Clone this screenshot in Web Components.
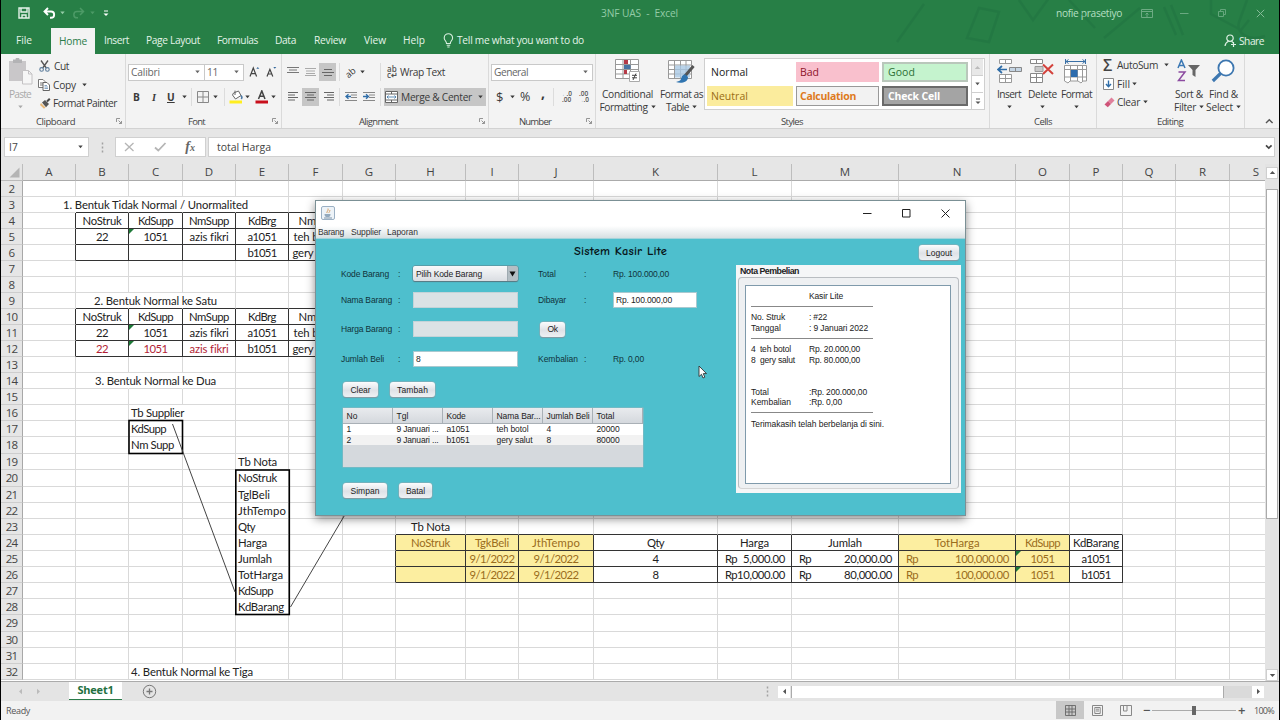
<!DOCTYPE html>
<html lang="id">
<head>
<meta charset="utf-8">
<title>3NF UAS - Excel</title>
<style>
  body {
    margin: 0;
    width: 1280px;
    height: 720px;
    overflow: hidden;
    background: #000;
    font-family: "Open Sans", "Noto Sans", sans-serif;
    font-size: 10.2px;
    color: #333;
  }
</style>
</head>
<body>
<excel-app></excel-app>

<script>
const ICONS = {
  save: [12, 12, '<path d="M1 1h10v10H1zM3 1v4h6V1M4 11V8h4v3" fill="none" stroke="#e6f3ea" stroke-width="1.4"/>'],
  undo: [13, 12, '<path d="M5 1L1.5 4.5 5 8M2 4.5h6a3 3 0 010 6.3H7" fill="none" stroke="#fff" stroke-width="1.9"/>'],
  redo: [13, 12, '<path d="M8 1l3.500 3.500L8 8M11 4.500H5a3 3 0 000 6.300h1" fill="none" stroke="#4c9a66" stroke-width="1.500"/>'],
  qat: [6, 7, '<path d="M1 1h4" stroke="#fff"/><path d="M.5 3.500h5L3 6z" fill="#fff"/>'],
  more: [6, 7, '<path d="M1 1h4" stroke="#555"/><path d="M.5 3.500h5L3 6z" fill="#555"/>'],
  caret: [5, 4, '<path d="M.3.500h4.400L2.500 3.200z" fill="currentColor"/>'],
  bulb: [11, 15, '<path d="M3.500 10.500C3.500 8 1.200 7.500 1.200 4.900a4.200 4.200 0 018.400 0c0 2.600-2.300 3.100-2.300 5.600zM3.700 12.300h3.500M4.300 14h2.300" fill="none" stroke="#d9f0e0" stroke-width="1.100"/>'],
  person: [13, 13, '<circle cx="6" cy="4.200" r="3.200" fill="none" stroke="#e0f2e6" stroke-width="1.200"/><path d="M1 12c.4-2.500 1.700-4 3.600-4.700M7.500 7.300L9 8.500M9.500 8v5M7 10.500h5" fill="none" stroke="#e0f2e6" stroke-width="1.200"/>'],
  ribbonOpts: [12, 9, '<path d="M.5.500h11v8H.5zM.5 2.500h11M6 8V4M4.500 5.500L6 4l1.500 1.500" fill="none" stroke="#6dab83"/>'],
  tMin: [9, 3, '<path d="M0 1.500h8.500" stroke="#6aa981"/>'],
  tRestore: [8, 8, '<path d="M.5 2.500h5v5h-5zM2.500 2V.5h5v5H6" fill="none" stroke="#64a67c"/>'],
  tClose: [9, 9, '<path d="M.8.800l7.400 7.400M8.200.800L.8 8.200" stroke="#86bc98"/>'],
  paste: [25, 27, '<path d="M1 3h17v20H1z" fill="#c9c7c9"/><path d="M5 1.500h2.500a2 2 0 014 0H14V5H5z" fill="#b3b3b5"/><path d="M14.500 12.500h6l3.500 3.500v10h-9.500z" fill="#f6f6f6" stroke="#c4c2c4"/><path d="M20.500 12.500V16H24" fill="none" stroke="#c4c2c4"/>'],
  cut: [11, 12, '<path d="M2 .5l5.300 7.500M9 .5L3.700 8" stroke="#555" stroke-width="1.300"/><circle cx="2.600" cy="9.400" r="1.800" fill="none" stroke="#5b7c9b" stroke-width="1.100"/><circle cx="8.400" cy="9.400" r="1.800" fill="none" stroke="#5b7c9b" stroke-width="1.100"/>'],
  copy: [12, 12, '<path d="M.5.500h4.500L7 2.500v6H.5zM2 4h3M2 6h3" fill="#fff" stroke="#777"/><path d="M5 3.500h4L11.500 6v5.500H5z" fill="#fff" stroke="#666"/><path d="M6.500 6.500H9M6.500 8H10M6.500 9.500H10" stroke="#6a8fb5" stroke-width=".8"/>'],
  painter: [11, 11, '<path d="M1 5l4.500 4.500L4 10.800 0 7z" fill="#e8b878"/><path d="M2 4.500L5 2l4 4-3 3.200z" fill="#555"/><path d="M7 3.500L9.800.8" stroke="#4a4a4a" stroke-width="2"/>'],
  launcher: [6, 6, '<path d="M.5 4V.5H4M2.500 2.500L5.500 5.500M5.500 3v2.500H3" fill="none" stroke="#8a8a8a" stroke-width=".9"/>'],
  growFont: [11, 12, '<path d="M1 10.500L4.300 2l3.300 8.500M2.200 7.700h4.200" fill="none" stroke="#444" stroke-width="1.200"/><path d="M7.300 2.800L8.800 1l1.500 1.800z" fill="#35689b"/>'],
  shrinkFont: [11, 12, '<path d="M1 10.500L3.900 3.300l2.900 7.200M2 8h3.800" fill="none" stroke="#444" stroke-width="1.200"/><path d="M7.300 1h3L8.800 2.800z" fill="#35689b"/>'],
  borders: [12, 12, '<path d="M.5.500h11v11H.5zM6 .5v11M.5 6h11" fill="none" stroke="#888"/>'],
  bucket: [14, 14, '<path d="M4.500 3L9.500 1l2.500 4.500-5.500 3.500L3.500 5zM6 5V.6" fill="#fff" stroke="#666"/><path d="M12 5.500c1 1 1 2.500.3 3.500" stroke="#4a78a5" stroke-width="1.600" fill="none"/><path d="M.5 10.500h12.500v3H.5z" fill="#ffee1f"/>'],
  fontColor: [14, 14, '<path d="M3.500 9L6.800.900 10 9M4.700 6.300h4.200" fill="none" stroke="#444" stroke-width="1.500"/><path d="M.5 10.500h12.500v3H.5z" fill="#c80f1b"/>'],
  linesTop: [13, 10, '<path d="M0 .5h12M2 3h8M0 5.500h12" stroke="#777"/>'],
  linesMid: [12, 10, '<path d="M0 1.500h11M1 4h9M1 6.500h9M0 8.500h11" stroke="#aaa"/>'],
  linesBottom: [12, 10, '<path d="M2 2.500h8M0 5.500h12M2 8.500h8" stroke="#666"/>'],
  alignLeft: [11, 9, '<path d="M0 .5h10M0 3h7M0 5.500h10M0 8h7" stroke="#666"/>'],
  alignCenter: [12, 9, '<path d="M0 .5h11M2 3h7M0 5.500h11M2 8h7" stroke="#666"/>'],
  alignRight: [11, 9, '<path d="M0 .5h10M3 3h7M0 5.500h10M3 8h7" stroke="#666"/>'],
  indentLeft: [13, 10, '<path d="M0 .5h12M6 3h6M6 5.500h6M0 8.500h12" stroke="#888"/><path d="M6 4.500H1.500M3.500 2.300L1 4.500l2.500 2.200" fill="none" stroke="#2f6da8" stroke-width="1.300"/>'],
  indentRight: [13, 10, '<path d="M0 .5h12M6 3h6M6 5.500h6M0 8.500h12" stroke="#888"/><path d="M0 4.500h4.500M3 2.300l2.500 2.200L3 6.700" fill="none" stroke="#2f6da8" stroke-width="1.300"/>'],
  mergeCells: [13, 12, '<path d="M.5.500h12v11H.5zM.5 3h12M.5 9h12M6.500.500V3M6.500 9v2.500" fill="#fff" stroke="#666"/><path d="M2 6h9M3.500 4.500L2 6l1.500 1.500M9.500 4.500L11 6 9.500 7.500" fill="none" stroke="#4b7fae" stroke-width=".9"/>'],
  condFmt: [26, 26, '<path d="M.5 1.500h23v19H.5zM.5 6.500h23M.5 11.500h23M.5 16h23M8 1.500v19M15.500 1.500v19" fill="#fff" stroke="#999"/><path d="M9 2h4v4H9zM9 12h3v4H9z" fill="#b53a47"/><path d="M9 7h6.500v4H9z" fill="#4873a3"/><path d="M14.500 13.500h10v10h-10z" fill="#fff" stroke="#aaa"/><path d="M17 17.300h5M17 19.800h5M21 15.500l-3 6.500" stroke="#444"/>'],
  fmtTable: [27, 25, '<path d="M.5 1.500h23v18H.5zM.5 6h23M.5 10.500h23M.5 15h23M6.500 1.500v18M12.500 1.500v18M18 1.500v18" fill="#fff" stroke="#999"/><path d="M7 6.500h15v12H7z" fill="#a9c8e3" opacity=".8"/><path d="M25.500 7L17 17" stroke="#555" stroke-width="3"/><path d="M17.500 15.500c-3 0-3.500 1.500-4.500 4.500-.5 1.800-3 2.500-5 3 4 1.500 12 1 12-5z" fill="#2f74b0"/>'],
  insertCells: [25, 25, '<path d="M2.500.500h12v4h-12zM8.500.500v4M2.500 15.500h12v8h-12zM8.500 15.500v8M2.500 19.500h12" fill="#fff" stroke="#999"/><path d="M12.500 8.500h12v4h-12zM18.500 8.500v4" fill="#c5d5e4" stroke="#888"/><path d="M10 10.500H2M5 7l-4 3.500L5 14" fill="none" stroke="#2f6da8" stroke-width="1.700"/>'],
  deleteCells: [25, 25, '<path d="M.5.500h12v4H.5zM6.500.500v4M.5 14.500h12v9H.5zM6.500 14.500v9M.5 18.500h12" fill="#fff" stroke="#888"/><path d="M5 7.500h8v5H5z" fill="#c9c9c9" stroke="#999"/><path d="M13 5.500l10 9.500M23 5.500L13 15" stroke="#d3423c" stroke-width="2"/>'],
  formatCells: [25, 25, '<path d="M1.500 2.500h20M1.500 0v5M21.500 0v5M4.500.500l-2.500 2 2.500 2M18.500.500l2.500 2-2.500 2" fill="none" stroke="#3a70a6"/><path d="M.5 6.500h22V22H19l-2 2-3-2H6l-2 2-3.500-2zM.5 10.500h22M.5 18h22M6.500 6.500V22M13.500 6.500V22M18.500 6.500V22" fill="#fff" stroke="#999"/><path d="M7 11h6.500v7H7z" fill="#2d6cad"/>'],
  fill: [11, 12, '<path d="M.5.500h10v11H.5z" fill="#fff" stroke="#888"/><path d="M5.500 2.500v6M3 6l2.500 2.800L8 6" fill="none" stroke="#2f6da8" stroke-width="1.400"/>'],
  eraser: [11, 11, '<path d="M4 4l3.500-3.500 3 3L7 7z" fill="#e0809c"/><path d="M.5 7.500L4 4l3 3-3.200 3.300z" fill="#cf5378"/>'],
  sortFilter: [24, 24, '<path d="M1 9L4.400 1 8 9M2.300 6.500h4.300" fill="none" stroke="#3a77b3" stroke-width="1.500"/><path d="M1.500 13H8L1.500 21.500H8" fill="none" stroke="#8c4ba0" stroke-width="1.500"/><path d="M11 6h12l-4.500 5v7l-3-2v-5z" fill="#666"/>'],
  magnifier: [25, 25, '<circle cx="15" cy="9" r="7.600" fill="#fff" stroke="#3d77b0" stroke-width="1.800"/><path d="M9.500 14.500L1.800 22" stroke="#3d77b0" stroke-width="3.200"/>'],
  chevUp: [9, 6, '<path d="M1 5l3.300-3.300L7.600 5" fill="none" stroke="#555" stroke-width="1.400"/>'],
  chevDown: [8, 6, '<path d="M1 1.300L3.800 4 6.600 1.300" fill="none" stroke="#444" stroke-width="1.700"/>'],
  cancel: [11, 10, '<path d="M1 1l8.500 8M9.500 1L1 9" stroke="#b5b5b5" stroke-width="1.300"/>'],
  check: [13, 10, '<path d="M1 5.500L4.300 8.500 11.500 1" fill="none" stroke="#b5b5b5" stroke-width="1.800"/>'],
  dots: [3, 11, '<path d="M1.500.500v2M1.500 4.500v2M1.500 8.500v2" stroke="#a2a2a2" stroke-width="1.500"/>'],
  corner: [11, 11, '<path d="M10.500.500v10H.5z" fill="#b4b4b4"/>'],
  arrLeft: [5, 7, '<path d="M4 .8v5.400L1 3.500z" fill="currentColor"/>'],
  arrRight: [5, 7, '<path d="M1 .8v5.400l3-2.700z" fill="currentColor"/>'],
  arrUp: [7, 5, '<path d="M.8 4h5.400L3.500 1z" fill="currentColor"/>'],
  arrDown: [7, 5, '<path d="M.8 1h5.400L3.500 4z" fill="currentColor"/>'],
  addSheet: [15, 15, '<circle cx="7.500" cy="7.500" r="6.200" fill="none" stroke="#777"/><path d="M4.500 7.500h6M7.500 4.500v6" stroke="#777" stroke-width="1.300"/>'],
  viewNormal: [11, 11, '<path d="M.5.500h10v10H.5zM4 .5v10M7 .5v10M.5 4h10M.5 7h10" fill="none" stroke="#666" stroke-width=".9"/>'],
  viewPage: [11, 11, '<path d="M.5.500h10v10H.5zM2.800 2.500h5.400v6H2.800zM4 4.200h3M4 6h3" fill="none" stroke="#888"/>'],
  viewBreak: [12, 11, '<path d="M.5.500h11v10H.5zM3.500.500V6H7V.5" fill="none" stroke="#888"/>'],
  java: [14, 14, '<rect x=".5" y=".5" width="13" height="13" rx="1.500" fill="#edf3f8" stroke="#9bb0c4"/><path d="M3.500 8h6c0 1.500-.5 2.500-1.500 3h-3c-1-.5-1.500-1.500-1.500-3z" fill="#93a9bd"/><path d="M3 12h8" stroke="#7e93a8"/><path d="M6 7C5 5.500 8 5 7 2.500M8 7c-.5-1 1.500-1.500.8-3" fill="none" stroke="#d9a46b"/>'],
  wMin: [9, 3, '<path d="M0 1.500h8.500" stroke="#222"/>'],
  wMax: [9, 9, '<path d="M.5.500h7.500v7.500H.5z" fill="none" stroke="#222"/>'],
  wClose: [9, 9, '<path d="M.5.500l8 8M8.500.500l-8 8" stroke="#222"/>'],
  comboArrow: [7, 6, '<path d="M.5.500h6L3.500 5.500z" fill="#111"/>'],
  pointer: [9, 14, '<path d="M1 1v10.500l2.500-2.200L5 13l1.800-.8-1.500-3.600H8.500z" fill="#fff" stroke="#333" stroke-width=".9"/>'],
};

class UiIcon extends HTMLElement {
    connectedCallback() {
        const [w, h, body] = ICONS[this.getAttribute('name')];
        this.attachShadow({mode: 'open'}).innerHTML = `
            <style>
              :host { display: inline-block; flex: none; width: ${w}px; height: ${h}px; }
              svg { display: block; }
            </style>
            <svg width="${w}" height="${h}" viewBox="0 0 ${w} ${h}">${body}</svg>`;
    }
}

// Text that is tracked in or out until it takes up exactly `w` pixels.
class FitText extends HTMLElement {
    connectedCallback() {
        if (this.shadowRoot) return;
        this.attachShadow({mode: 'open'}).innerHTML = `
            <style>
              :host { display: inline-block; flex: none; justify-self: start; white-space: nowrap; }
              slot { white-space: pre; }
            </style><slot></slot>`;
        const want = Number(this.getAttribute('w'));
        const range = document.createRange();
        range.selectNodeContents(this);
        const natural = range.getBoundingClientRect().width;
        const count = this.textContent.length;
        if (want && natural && count) {
            this.style.letterSpacing = `${(want - natural) / count}px`;
            this.style.width = `${want}px`;
        }
    }
}

// A bar whose children start at the listed x stops; `from` is the bar's own left edge.
class ToolRow extends HTMLElement {
    connectedCallback() {
        const from = Number(this.getAttribute('from') || 0);
        const at = this.getAttribute('at').split(' ').map(Number);
        const tracks = at.map((x, i) => (i + 1 < at.length ? `${at[i + 1] - x}px` : 'auto')).join(' ');
        this.attachShadow({mode: 'open'}).innerHTML = `
            <style>
              :host {
                display: grid;
                grid-template-columns: ${tracks};
                grid-template-rows: 100%;
                justify-content: start;
                justify-items: start;
                align-items: center;
                padding-left: ${at[0] - from}px;
              }
            </style>
            <slot></slot>`;
    }
}

class RibbonGroup extends HTMLElement {
    connectedCallback() {
        const launcher = this.hasAttribute('launcher') ? '<ui-icon name="launcher"></ui-icon>' : '';
        this.attachShadow({mode: 'open'}).innerHTML = `
            <style>
              :host {
                display: flex;
                flex-direction: column;
                flex: none;
                box-sizing: border-box;
                width: ${this.getAttribute('w')}px;
                border-right: 1px solid #dadada;
              }
              .content { height: 60px; }
              .foot {
                display: grid;
                grid-template-columns: 1fr 6px;
                align-items: center;
                height: 14px;
                padding-right: ${launcher ? 3 : 0}px;
                font-size: 9.5px;
                color: #444;
              }
              .foot fit-text { justify-self: start; margin-left: ${this.getAttribute('lx')}px; }
            </style>
            <div class="content"><slot></slot></div>
            <div class="foot"><fit-text w="${this.getAttribute('lw')}">${this.getAttribute('label')}</fit-text>${launcher}</div>`;
    }
}

class ExcelTop extends HTMLElement {
    connectedCallback() {
        this.attachShadow({mode: 'open'}).innerHTML = `
            <style>
              :host {
                display: block;
                height: 54px;
                color: #e4f4e9;
                background: #277f46;
                position: relative;
              }
              .doodle { position: absolute; right: 0; top: 0; }
              .title { height: 26px; color: #93cba6; }
              .tabs { height: 28px; position: relative; }
              .home {
                display: flex;
                align-items: center;
                justify-content: center;
                width: 44px;
                height: 26px;
                color: #2b7c4a;
                background: #f3f3f3;
                margin-top: 2px;
              }
              .home fit-text { margin-bottom: 1px; }
              .dim { color: #4c9a66; }
              .user { color: #b5dfc3; }
              .share { position: relative; top: 1px; }
            </style>
            <svg class="doodle" width="460" height="54" fill="none" stroke="#1f7040" stroke-width="2.500" opacity=".4">
              <path d="M78 42L105 4M160 8l-12 30 22 4 10-30zM200 0l14 20 16-22M285 38l36-30M250 0l26 28M352 5l12 30M345 7l12 28M392 0v14l30 16 8-10M428 0l-8 22c-3 10 8 20 26 14"/>
            </svg>
            <tool-row class="title" from="1" at="18 43 60 72 90 103 601 1056 1141 1180 1218 1256">
              <ui-icon name="save"></ui-icon><ui-icon name="undo"></ui-icon><ui-icon name="caret"></ui-icon>
              <ui-icon name="redo"></ui-icon><ui-icon name="caret" class="dim"></ui-icon><ui-icon name="qat"></ui-icon>
              <fit-text w="77">3NF UAS  -  Excel</fit-text>
              <fit-text w="66" class="user">nofie prasetiyo</fit-text>
              <ui-icon name="ribbonOpts"></ui-icon><ui-icon name="tMin"></ui-icon><ui-icon name="tRestore"></ui-icon><ui-icon name="tClose"></ui-icon>
            </tool-row>
            <tool-row class="tabs" from="1" at="16 51 104 146 217 275 314 364 403 443 457 1224 1239">
              <fit-text w="16">File</fit-text>
              <span class="home"><fit-text w="28">Home</fit-text></span>
              <fit-text w="25">Insert</fit-text>
              <fit-text w="54">Page Layout</fit-text>
              <fit-text w="41">Formulas</fit-text>
              <fit-text w="21">Data</fit-text>
              <fit-text w="32">Review</fit-text>
              <fit-text w="22">View</fit-text>
              <fit-text w="22">Help</fit-text>
              <ui-icon name="bulb"></ui-icon>
              <fit-text w="127">Tell me what you want to do</fit-text>
              <ui-icon name="person"></ui-icon>
              <fit-text w="25" class="share">Share</fit-text>
            </tool-row>`;
    }
}

class ExcelRibbon extends HTMLElement {
    connectedCallback() {
        this.attachShadow({mode: 'open'}).innerHTML = `
            <style>
              :host {
                display: flex;
                box-sizing: border-box;
                height: 75px;
                background: #f3f3f3;
                border-bottom: 1px solid #d2d2d2;
                color: #3a3a3a;
              }
              .side { display: flex; }
              .big { display: grid; grid-template-rows: 32px 13px 13px; align-content: start; justify-items: center; align-items: center; padding-top: 1px; }
              .big > fit-text { justify-self: center; }
              .stack { padding-top: 3px; }
              .stack tool-row { height: 18.5px; }
              .two { padding-top: 6px; }
              .two tool-row { height: 24.5px; }
              .combo {
                display: flex;
                align-items: center;
                justify-content: space-between;
                box-sizing: border-box;
                height: 17px;
                padding: 0 4px 0 2px;
                border: 1px solid #c9c9c9;
                background: #fff;
                color: #666;
              }
              .sel { display: flex; align-items: center; justify-content: center; height: 18px; width: 17px; background: #c6c6c6; }
              .merge { display: flex; align-items: center; gap: 3px; box-sizing: border-box; width: 102px; height: 18px; padding-left: 1px; background: #c6c6c6; }
              .merge ui-icon:last-child { margin-left: 3px; }
              .sep { width: 1px; height: 18px; background: #dcdcdc; }
              .faint { color: #a9a9a9; }
              .tiny { font-size: 6.5px; line-height: 6px; font-weight: 600; white-space: pre; color: #555; }
              .tiny b { font-size: 4.5px; color: #2f6da8; }
              .line { display: flex; align-items: center; gap: 3px; }
              .gallery {
                display: grid;
                grid-template-columns: 86px 83px 86px 12px;
                box-sizing: border-box;
                width: 281px;
                height: 52px;
                margin-top: 4px;
                padding: 3px 0 3px 2px;
                gap: 0 3px;
                background: #fff;
                border: 1px solid #cfcfcf;
                font-size: 10.5px;
              }
              .col { display: flex; flex-direction: column; justify-content: space-between; }
              .style { display: flex; align-items: center; box-sizing: border-box; height: 20px; padding-left: 4px; }
              .style.normal { color: #222; }
              .style.bad { background: #f9c0cd; color: #8d1228; }
              .style.good { background: #c5f3ce; color: #2c6f35; border: 2px solid #b9c7bb; }
              .style.neutral { background: #fbec9d; color: #9a6c14; }
              .style.calc { background: #f2f2f2; color: #de7a1d; border: 1px solid #999; font-weight: 700; padding-left: 3px; }
              .style.check { background: #a4a4a4; color: #fff; border: 2px solid #6a6a6a; font-weight: 700; }
              .scroll { display: flex; flex-direction: column; margin: -3px 0; border-left: 1px solid #cfcfcf; }
              .scroll span { display: flex; flex: 1; align-items: center; justify-content: center; border-bottom: 1px solid #cfcfcf; color: #555; }
              .scroll span:first-child { background: #e8e8e8; color: #bbb; }
              .scroll span:last-child { border: 0; }
              .sigma { font-size: 16px; line-height: 16px; font-weight: 600; color: #444; }
              .end { display: flex; flex: 1; align-items: flex-end; justify-content: flex-end; padding: 0 5px 4px 0; }
            </style>

            <ribbon-group w="125" label="Clipboard" lw="39" lx="35" launcher>
              <div class="side">
                <div class="big" style="width:36px;padding-left:1px">
                  <ui-icon name="paste"></ui-icon><fit-text w="22" class="faint">Paste</fit-text><ui-icon name="caret" class="faint"></ui-icon>
                </div>
                <div class="stack">
                  <tool-row from="38" at="39 54"><ui-icon name="cut"></ui-icon><fit-text w="15">Cut</fit-text></tool-row>
                  <tool-row from="38" at="38 53 82"><ui-icon name="copy"></ui-icon><fit-text w="23">Copy</fit-text><ui-icon name="caret"></ui-icon></tool-row>
                  <tool-row from="38" at="40 53"><ui-icon name="painter"></ui-icon><fit-text w="64">Format Painter</fit-text></tool-row>
                </div>
              </div>
            </ribbon-group>

            <ribbon-group w="156" label="Font" lw="17" lx="62" launcher>
              <div class="two">
                <tool-row from="126" at="128 204 249 266">
                  <span class="combo" style="width:77px"><fit-text w="29">Calibri</fit-text><ui-icon name="caret"></ui-icon></span>
                  <span class="combo" style="width:40px"><fit-text w="11">11</fit-text><ui-icon name="caret"></ui-icon></span>
                  <ui-icon name="growFont"></ui-icon><ui-icon name="shrinkFont"></ui-icon>
                </tool-row>
                <tool-row from="126" at="133 152 167 182 191 197 213 224 229 245 255 271">
                  <b>B</b><b><i style="font-family:'Liberation Serif',serif">I</i></b><b><u>U</u></b><ui-icon name="caret"></ui-icon>
                  <span class="sep"></span><ui-icon name="borders"></ui-icon><ui-icon name="caret"></ui-icon>
                  <span class="sep"></span><ui-icon name="bucket"></ui-icon><ui-icon name="caret"></ui-icon>
                  <ui-icon name="fontColor"></ui-icon><ui-icon name="caret"></ui-icon>
                </tool-row>
              </div>
            </ribbon-group>

            <ribbon-group w="207" label="Alignment" lw="39" lx="77" launcher>
              <div class="two">
                <tool-row from="282" at="287 305 319 339 345 360 380 387 400">
                  <ui-icon name="linesTop"></ui-icon><ui-icon name="linesMid"></ui-icon>
                  <span class="sel"><ui-icon name="linesBottom"></ui-icon></span>
                  <span class="sep"></span>
                  <span style="font-size:9px;transform:rotate(-40deg)">ab</span><ui-icon name="caret"></ui-icon>
                  <span class="sep"></span>
                  <span class="tiny" style="font-size:8px">ab
c↵</span>
                  <fit-text w="45">Wrap Text</fit-text>
                </tool-row>
                <tool-row from="282" at="288 302 324 339 345 363 380 384">
                  <ui-icon name="alignLeft"></ui-icon>
                  <span class="sel"><ui-icon name="alignCenter"></ui-icon></span>
                  <ui-icon name="alignRight"></ui-icon><span class="sep"></span>
                  <ui-icon name="indentLeft"></ui-icon><ui-icon name="indentRight"></ui-icon>
                  <span class="sep"></span>
                  <span class="merge"><ui-icon name="mergeCells"></ui-icon><fit-text w="71">Merge &amp; Center</fit-text><ui-icon name="caret"></ui-icon></span>
                </tool-row>
              </div>
            </ribbon-group>

            <ribbon-group w="107" label="Number" lw="32" lx="30" launcher>
              <div class="two">
                <tool-row from="489" at="491">
                  <span class="combo" style="width:102px"><fit-text w="34">General</fit-text><ui-icon name="caret"></ui-icon></span>
                </tool-row>
                <tool-row from="489" at="496 510 520 541 553 562 579">
                  <span style="font-size:13px">$</span><ui-icon name="caret"></ui-icon>
                  <fit-text w="11" style="font-size:12.5px">%</fit-text><b style="font-size:14px;line-height:8px;margin-top:-8px">,</b>
                  <span class="sep"></span>
                  <span class="tiny"><b>←</b>.0
.00</span>
                  <span class="tiny">.00
<b>→</b>.0</span>
                </tool-row>
              </div>
            </ribbon-group>

            <ribbon-group w="394" label="Styles" lw="22" lx="185">
              <div class="side">
                <div class="big" style="width:63px">
                  <ui-icon name="condFmt"></ui-icon><fit-text w="51">Conditional</fit-text>
                  <span class="line"><fit-text w="48">Formatting</fit-text><ui-icon name="caret"></ui-icon></span>
                </div>
                <div class="big" style="width:45px">
                  <ui-icon name="fmtTable"></ui-icon><fit-text w="43">Format as</fit-text>
                  <span class="line"><fit-text w="23">Table</fit-text><ui-icon name="caret"></ui-icon></span>
                </div>
                <div class="gallery">
                  <div class="col">
                    <span class="style normal"><fit-text w="37">Normal</fit-text></span>
                    <span class="style neutral"><fit-text w="37">Neutral</fit-text></span>
                  </div>
                  <div class="col">
                    <span class="style bad"><fit-text w="19">Bad</fit-text></span>
                    <span class="style calc"><fit-text w="56">Calculation</fit-text></span>
                  </div>
                  <div class="col">
                    <span class="style good"><fit-text w="27">Good</fit-text></span>
                    <span class="style check"><fit-text w="52">Check Cell</fit-text></span>
                  </div>
                  <div class="scroll"><span><ui-icon name="arrUp"></ui-icon></span><span><ui-icon name="caret"></ui-icon></span><span><ui-icon name="more"></ui-icon></span></div>
                </div>
              </div>
            </ribbon-group>

            <ribbon-group w="107" label="Cells" lw="18" lx="44">
              <div class="side" style="padding-left:4px">
                <div class="big" style="width:30px"><ui-icon name="insertCells"></ui-icon><fit-text w="24">Insert</fit-text><ui-icon name="caret"></ui-icon></div>
                <div class="big" style="width:37px"><ui-icon name="deleteCells"></ui-icon><fit-text w="29">Delete</fit-text><ui-icon name="caret"></ui-icon></div>
                <div class="big" style="width:31px"><ui-icon name="formatCells"></ui-icon><fit-text w="31">Format</fit-text><ui-icon name="caret"></ui-icon></div>
              </div>
            </ribbon-group>

            <ribbon-group w="148" label="Editing" lw="26" lx="60">
              <div class="side">
                <div class="stack" style="width:76px;padding-top:2px">
                  <tool-row from="1097" at="1103 1117 1164"><span class="sigma">Σ</span><fit-text w="41">AutoSum</fit-text><ui-icon name="caret"></ui-icon></tool-row>
                  <tool-row from="1097" at="1103 1117 1132"><ui-icon name="fill"></ui-icon><fit-text w="13">Fill</fit-text><ui-icon name="caret"></ui-icon></tool-row>
                  <tool-row from="1097" at="1104 1117 1143"><ui-icon name="eraser"></ui-icon><fit-text w="23">Clear</fit-text><ui-icon name="caret"></ui-icon></tool-row>
                </div>
                <div class="big" style="width:32px"><ui-icon name="sortFilter"></ui-icon><fit-text w="28">Sort &amp;</fit-text><span class="line"><fit-text w="22">Filter</fit-text><ui-icon name="caret"></ui-icon></span></div>
                <div class="big" style="width:37px"><ui-icon name="magnifier"></ui-icon><fit-text w="29">Find &amp;</fit-text><span class="line"><fit-text w="27">Select</fit-text><ui-icon name="caret"></ui-icon></span></div>
              </div>
            </ribbon-group>
            <div class="end"><ui-icon name="chevUp"></ui-icon></div>`;
    }
}

class FormulaBar extends HTMLElement {
    connectedCallback() {
        this.attachShadow({mode: 'open'}).innerHTML = `
            <style>
              :host { display: flex; align-items: flex-start; height: 27px; padding: 8px 4px 0 3px; background: #e6e6e6; color: #444; }
              .box { display: flex; align-items: center; box-sizing: border-box; height: 20px; background: #fff; border: 1px solid #d0d0d0; padding: 0 5px; }
              .name { width: 85px; justify-content: space-between; padding-left: 4px; }
              .dots { margin: 5px 11px 0 12px; }
              .tools { width: 91px; justify-content: space-between; padding: 0 10px 0 8px; margin-right: 2px; }
              .value { flex: 1; justify-content: space-between; padding: 0 1px 0 8px; font-size: 10.5px; }
              .fx { font: italic 600 14px "Liberation Serif", serif; color: #666; }
              .fx small { font-size: 10px; }
            </style>
            <div class="box name"><fit-text w="9">I7</fit-text><ui-icon name="caret"></ui-icon></div>
            <ui-icon class="dots" name="dots"></ui-icon>
            <div class="box tools"><ui-icon name="cancel"></ui-icon><ui-icon name="check"></ui-icon><span class="fx">f<small>x</small></span></div>
            <div class="box value"><fit-text w="54">total Harga</fit-text><ui-icon name="chevDown"></ui-icon></div>`;
    }
}

const COLS = 'ABCDEFGHIJKLMNOPQRS'.split('');
const COL_W = [53, 53, 54, 53, 53, 54, 53, 70, 53, 75, 124, 74, 107, 117, 54, 53, 53, 54, 53];
const ROW_H = {18: 17, 20: 17, 29: 17};

// [text, width, classes]; accounting cells carry a second text and width
const CELLS = {
  C3: ['1. Bentuk Tidak Normal / Unormalited', 185],
  B4: ['NoStruk', 39], C4: ['KdSupp', 35], D4: ['NmSupp', 40], E4: ['KdBrg', 28], F4: ['NmBrg', 34],
  B5: ['22', 12], C5: ['1051', 24, 'flag'], D5: ['azis fikri', 39], E5: ['a1051', 29], F5: ['teh botol', 44],
  E6: ['b1051', 29], F6: ['gery salut', 46],
  C9: ['2. Bentuk Normal ke Satu', 123],
  B10: ['NoStruk', 39], C10: ['KdSupp', 35], D10: ['NmSupp', 40], E10: ['KdBrg', 28], F10: ['NmBrg', 34],
  B11: ['22', 12], C11: ['1051', 24, 'flag'], D11: ['azis fikri', 39], E11: ['a1051', 29], F11: ['teh botol', 44],
  B12: ['22', 12, 'red'], C12: ['1051', 24, 'red flag'], D12: ['azis fikri', 39, 'red'], E12: ['b1051', 29], F12: ['gery salut', 46],
  C14: ['3. Bentuk Normal ke Dua', 121],
  C16: ['Tb Supplier', 53, 'left'],
  C17: ['KdSupp', 35, 'left'], C18: ['Nm Supp', 43, 'left'],
  E19: ['Tb Nota', 39, 'left'],
  E20: ['NoStruk', 39, 'left'], E21: ['TglBeli', 32, 'left'], E22: ['JthTempo', 48, 'left'],
  E23: ['Qty', 17, 'left'], E24: ['Harga', 29, 'left'], E25: ['Jumlah', 34, 'left'],
  E26: ['TotHarga', 45, 'left'], E27: ['KdSupp', 35, 'left'], E28: ['KdBarang', 46, 'left'],
  C32: ['4. Bentuk Normal ke Tiga', 122, 'left'],
  H23: ['Tb Nota', 39],
  H24: ['NoStruk', 39, 'gold'], I24: ['TgkBeli', 34, 'gold'], J24: ['JthTempo', 48, 'gold'], K24: ['Qty', 17],
  L24: ['Harga', 29], M24: ['Jumlah', 34], N24: ['TotHarga', 45, 'gold'], O24: ['KdSupp', 35, 'gold'], P24: ['KdBarang', 46],
  H25: ['', 0, 'gold'], I25: ['9/1/2022', 45, 'gold'], J25: ['9/1/2022', 45, 'gold'], K25: ['4', 6],
  L25: ['Rp', 12, 'acc', '5,000.00', 42], M25: ['Rp', 12, 'acc', '20,000.00', 48],
  N25: ['Rp', 12, 'acc gold', '100,000.00', 54], O25: ['1051', 24, 'gold flag'], P25: ['a1051', 29],
  H26: ['', 0, 'gold'], I26: ['9/1/2022', 45, 'gold'], J26: ['9/1/2022', 45, 'gold'], K26: ['8', 6],
  L26: ['Rp', 12, 'acc', '10,000.00', 48], M26: ['Rp', 12, 'acc', '80,000.00', 48],
  N26: ['Rp', 12, 'acc gold', '100,000.00', 54], O26: ['1051', 24, 'gold flag'], P26: ['b1051', 29],
};
// cells whose right gridline is hidden under overflowing text
const SPILL = ['A3', 'B3', 'C3', 'D3', 'B9', 'C9', 'B14', 'C14', 'C16', 'C32', 'D32'];
// [first col, first row, last col, last row]
const BOXES = [['B', 4, 'F', 6], ['B', 10, 'F', 12], ['H', 24, 'P', 26]];

class SheetGrid extends HTMLElement {
    connectedCallback() {
        this.attachShadow({mode: 'open'});
        this.render();
    }

    edges(c, r) {
        let out = '';
        for (const [c1, r1, c2, r2] of BOXES) {
            const a = COLS.indexOf(c1);
            const b = COLS.indexOf(c2);
            if (r >= r1 && r <= r2 && c >= a - 1 && c <= b) out += ' rk';
            if (c >= a && c <= b && r >= r1 - 1 && r <= r2) out += ' bk';
        }
        return out;
    }

    cell(c, r) {
        const key = COLS[c] + r;
        const [text = '', w = 0, cls = '', text2, w2] = CELLS[key] || [];
        const spill = SPILL.includes(key) ? ' spill' : '';
        const body = (text ? `<fit-text w="${w}">${text}</fit-text>` : '') + (text2 ? `<fit-text w="${w2}">${text2}</fit-text>` : '');
        return `<div class="cell ${cls}${spill}${this.edges(c, r)}">${body}</div>`;
    }

    render() {
        const rows = [];
        const heights = [];
        for (let r = 2; r <= 32; r++) {
            heights.push(`${ROW_H[r] || 16}px`);
            rows.push(`<div class="num"><fit-text w="${r < 10 ? 6 : 11.5}">${r}</fit-text></div>` + COLS.map((_, c) => this.cell(c, r)).join(''));
        }
        this.shadowRoot.innerHTML = `
            <style>
              :host { display: block; position: relative; width: 1264px; height: 517px; overflow: hidden; background: #fff; }
              .grid {
                display: grid;
                grid-template-columns: 22px ${COL_W.map((w) => w + 'px').join(' ')};
                grid-template-rows: 17px ${heights.join(' ')};
                font-family: Lato, Inter, sans-serif;
                font-size: 11.3px;
                color: #222;
              }
              .head, .num {
                display: flex;
                align-items: center;
                justify-content: center;
                background: #e6e6e6;
                border-right: 1px solid #b8b8b8;
                font-family: "Open Sans", "Noto Sans", sans-serif;
                font-size: 11.5px;
                color: #444;
                line-height: 10px;
              }
              .head { border-right-color: #bdbdbd; border-bottom: 1px solid #ababab; }
              .head:first-child { justify-content: flex-end; padding-right: 2px; border-bottom-color: #bbb; }
              .num { border-bottom: 1px solid #cdcdcd; border-right-color: #a8a8a8; }
              .cell {
                position: relative;
                display: flex;
                align-items: center;
                justify-content: center;
                min-width: 0;
                border-right: 1px solid #d9d9d9;
                border-bottom: 1px solid #d9d9d9;
                line-height: 14px;
              }
              .left { justify-content: flex-start; padding-left: 2px; }
              .acc { justify-content: space-between; padding: 0 6px 0 7px; }
              .gold { background: #fceea0; color: #9a6c1c; }
              .red { color: #b21e35; }
              .spill { border-right-color: transparent; }
              .rk { border-right-color: #333; }
              .bk { border-bottom-color: #333; }
              .flag::before {
                content: "";
                position: absolute;
                left: 0;
                top: 0;
                border-top: 5px solid #1e7a38;
                border-right: 5px solid transparent;
              }
              svg { position: absolute; left: 0; top: 0; }
            </style>
            <div class="grid">
              <div class="head"><ui-icon name="corner"></ui-icon></div>
              ${COLS.map((c) => `<div class="head">${c}</div>`).join('')}
              ${rows.join('')}
            </div>
            <svg width="1264" height="517" fill="none" stroke="#000">
              <rect x="128" y="256.500" width="53.500" height="33" stroke-width="1.600"/>
              <rect x="234.800" y="306" width="53.500" height="144.500" stroke-width="1.600"/>
              <path d="M171.500 260L234 428M289.500 443L395 264" stroke="#444"/>
            </svg>`;
    }
}

class ScrollRail extends HTMLElement {
    connectedCallback() {
        this.attachShadow({mode: 'open'}).innerHTML = `
            <style>
              :host { display: flex; flex-direction: column; box-sizing: border-box; width: 14px; padding: 3px 1px 0; background: #e3e3e3; align-items: center; color: #555; }
              span { display: flex; align-items: center; justify-content: center; box-sizing: border-box; width: 12px; height: 12px; background: #fff; border: 1px solid #cfcfcf; }
              .thumb { height: 331px; margin-top: 10px; border-color: #ababab; }
              .down { margin-top: 150px; }
            </style>
            <span><ui-icon name="arrUp"></ui-icon></span>
            <span class="thumb"></span>
            <span class="down"><ui-icon name="arrDown"></ui-icon></span>`;
    }
}

class SheetTabs extends HTMLElement {
    connectedCallback() {
        this.attachShadow({mode: 'open'}).innerHTML = `
            <style>
              :host { display: block; height: 20px; background: #e4e4e4; border-top: 1px solid #ababab; color: #555; box-sizing: border-box; }
              tool-row { height: 19px; }
              .faint { color: #bbb; }
              .tab { display: flex; align-items: center; justify-content: center; box-sizing: border-box; width: 53px; height: 18px; margin-top: -2px; background: #fff; border-bottom: 1.5px solid #2b7c4a; color: #23703f; font-weight: 700; font-size: 11px; }
              .tab fit-text { margin-bottom: 2px; }
              .btn { display: flex; align-items: center; justify-content: center; width: 12px; height: 12px; background: #fff; }
              .track { display: flex; box-sizing: border-box; width: 461px; height: 12px; background: #dadada; }
              .thumb { width: 433px; box-sizing: border-box; background: #fff; border: 1px solid #ababab; border-width: 0 1px; }
            </style>
            <tool-row from="1" at="18 36 69 142 766 778 791 1252">
              <ui-icon name="arrLeft" class="faint"></ui-icon><ui-icon name="arrRight" class="faint"></ui-icon>
              <span class="tab"><fit-text w="36">Sheet1</fit-text></span>
              <ui-icon name="addSheet"></ui-icon>
              <ui-icon name="dots"></ui-icon>
              <span class="btn"><ui-icon name="arrLeft"></ui-icon></span>
              <span class="track"><span class="thumb"></span></span>
              <span class="btn"><ui-icon name="arrRight"></ui-icon></span>
            </tool-row>`;
    }
}

class StatusBar extends HTMLElement {
    connectedCallback() {
        this.attachShadow({mode: 'open'}).innerHTML = `
            <style>
              :host { display: block; height: 19px; background: #f2f2f2; color: #555; font-size: 9px; }
              tool-row { height: 18px; }
              .view { display: flex; align-items: center; justify-content: center; width: 28px; height: 18px; background: #c8c8c8; }
              .slider { display: flex; align-items: center; justify-content: center; width: 84px; height: 9px; background: linear-gradient(#aaa, #aaa) center / 100% 1px no-repeat; }
              .slider i { width: 4px; height: 9px; background: #666; }
              .sign { font-size: 13px; font-weight: 600; line-height: 12px; }
            </style>
            <tool-row from="1" at="6 1056 1092 1120 1143 1152 1238 1254">
              <fit-text w="24">Ready</fit-text>
              <span class="view"><ui-icon name="viewNormal"></ui-icon></span>
              <ui-icon name="viewPage"></ui-icon><ui-icon name="viewBreak"></ui-icon>
              <span class="sign">−</span><span class="slider"><i></i></span><span class="sign">+</span>
              <fit-text w="20">100%</fit-text>
            </tool-row>`;
    }
}

class SwingButton extends HTMLElement {
    connectedCallback() {
        this.attachShadow({mode: 'open'}).innerHTML = `
            <style>
              :host {
                display: inline-flex;
                flex: none;
                align-items: center;
                justify-content: center;
                box-sizing: border-box;
                width: ${this.getAttribute('bw')}px;
                height: 15px;
                border-radius: 3px;
                background: linear-gradient(#fcfcfd, #dfe2e7 55%, #eef0f3);
                box-shadow: 0 0 0 .5px #98a5ad, 0 1px 1px #6f8f99;
                color: #222;
              }
            </style>
            <slot></slot>`;
    }
}

class SwingField extends HTMLElement {
    connectedCallback() {
        const off = this.hasAttribute('disabled');
        this.attachShadow({mode: 'open'}).innerHTML = `
            <style>
              :host {
                display: flex;
                align-items: center;
                box-sizing: border-box;
                width: ${this.getAttribute('bw')}px;
                height: 16px;
                padding-left: 2px;
                background: ${off ? '#dbe2e5' : '#fff'};
                border: 1px solid ${off ? '#c3d3d8' : '#a9c9d0'};
                color: #222;
              }
            </style>
            <slot></slot>`;
    }
}

class KasirTable extends HTMLElement {
    connectedCallback() {
        const head = [['No', 11], ['Tgl', 12], ['Kode', 19], ['Nama Bar...', 44], ['Jumlah Beli', 43], ['Total', 18]];
        const rows = [
            [['1', 4], ['9 Januari ...', 42], ['a1051', 23], ['teh botol', 32], ['4', 5], ['20000', 23]],
            [['2', 4], ['9 Januari ...', 42], ['b1051', 23], ['gery salut', 36], ['8', 5], ['80000', 23]],
        ];
        const line = (cls, items) => `<div class="${cls}">${items.map(([t, w]) => `<span><fit-text w="${w}">${t}</fit-text></span>`).join('')}</div>`;
        this.attachShadow({mode: 'open'}).innerHTML = `
            <style>
              :host { display: block; width: 300px; height: 59px; background: #d5d9dd; color: #222; box-shadow: 0 0 0 .5px #93b5bd; }
              div { display: grid; grid-template-columns: repeat(6, 50px); grid-template-rows: 100%; }
              span { display: flex; align-items: center; box-sizing: border-box; padding-left: 3.5px; }
              .head { height: 16px; background: linear-gradient(#e9ebee, #d3d7dc); }
              .head span { border-right: 1px solid #a9b0b6; border-bottom: 1px solid #a9b0b6; }
              .row { height: 10.7px; background: #fff; }
              .alt { background: #f2f2f2; }
            </style>
            ${line('head', head)}${line('row', rows[0])}${line('row alt', rows[1])}`;
    }
}

class NotaPanel extends HTMLElement {
    connectedCallback() {
        this.attachShadow({mode: 'open'}).innerHTML = `
            <style>
              :host { display: block; box-sizing: border-box; width: 225px; height: 228px; margin-top: 1px; padding: 0 2px 4px; background: #f5f6f7; color: #222; }
              .caption { display: block; height: 12px; line-height: 12px; padding-left: 2px; font-weight: 700; font-size: 8.8px; }
              .frame { box-sizing: border-box; height: 212px; padding: 7px 7px 5px 6px; border: 1.5px solid #b9bdc1; border-bottom-color: #d5d5d5; border-radius: 4px; background: #eef0f2; }
              .paper {
                display: grid;
                grid-template-columns: 58px 1fr;
                grid-auto-rows: 10.65px;
                align-items: center;
                box-sizing: border-box;
                height: 199px;
                padding: 4.500px 5px;
                border: 1.5px solid #7f9aab;
                background: #fff;
              }
              hr { grid-column: 1 / 3; width: 122px; margin: 0; border: 0; border-top: 1px solid #888; }
              .wide { grid-column: 1 / 3; }
            </style>
            <span class="caption"><fit-text w="59">Nota Pembelian</fit-text></span>
            <div class="frame">
              <div class="paper">
                <span></span><fit-text w="34">Kasir Lite</fit-text>
                <hr>
                <fit-text w="34">No. Struk</fit-text><fit-text w="18">: #22</fit-text>
                <fit-text w="30">Tanggal</fit-text><fit-text w="59">: 9 Januari 2022</fit-text>
                <hr>
                <fit-text w="40">4  teh botol</fit-text><fit-text w="51">Rp. 20.000,00</fit-text>
                <fit-text w="44">8  gery salut</fit-text><fit-text w="51">Rp. 80.000,00</fit-text>
                <span class="wide"></span><span class="wide"></span>
                <fit-text w="18">Total</fit-text><fit-text w="58">:Rp. 200.000,00</fit-text>
                <fit-text w="40">Kembalian</fit-text><fit-text w="33">:Rp. 0,00</fit-text>
                <hr>
                <fit-text w="133" class="wide">Terimakasih telah berbelanja di sini.</fit-text>
              </div>
            </div>`;
    }
}

class KasirWindow extends HTMLElement {
    connectedCallback() {
        this.attachShadow({mode: 'open'}).innerHTML = `
            <style>
              :host {
                display: flex;
                flex-direction: column;
                box-sizing: border-box;
                width: 651px;
                height: 316px;
                border: 1px solid #7b9095;
                background: #4ebfcd;
                box-shadow: 0 3px 9px rgba(0, 0, 0, .45);
                font-family: "Liberation Sans", Arial, sans-serif;
                font-size: 8.500px;
                color: #10333a;
              }
              .bar { flex: none; height: 24px; padding-bottom: 1px; background: #fff; }
              .menu { flex: none; height: 12px; background: linear-gradient(#fff, #d7dfe2); border-bottom: 1px solid #a5d3da; color: #333; }
              .top { display: flex; justify-content: space-between; flex: none; height: 25px; padding: 5px 6px 0 258px; box-sizing: border-box; }
              .top h1 { margin: 0; font: 600 12.500px/14px "Comic Sans MS", "Comic Neue", "Open Sans", cursive; color: #08161a; }
              .top swing-button { margin-top: 1px; }
              .main { display: flex; justify-content: space-between; padding: 0 4px 0 25px; }
              .form { display: grid; grid-template-rows: 19px 34px 24px 36px; grid-template-columns: 57px 15px 125px 46px 29px auto; align-items: center; }
              .combo {
                display: flex;
                align-items: center;
                justify-content: space-between;
                box-sizing: border-box;
                width: 105px;
                height: 15px;
                padding: 0 2px 0 3px;
                border-radius: 2px;
                background: linear-gradient(90deg, transparent 94px, #8a979e 94px, #b4bec4 95px), linear-gradient(#f8f9fa, #dadde2);
                box-shadow: 0 0 0 .5px #5f7e87, 0 1px 1px #527680;
                color: #222;
              }
              .actions { display: flex; padding-left: 2px; }
              .a1 { gap: 12px; margin-top: 5px; }
              .a2 { gap: 12px; margin-top: 16px; }
              kasir-table { margin: 11px 0 0 2px; }
            </style>
            <tool-row class="bar" from="316" at="321 863 902 941">
              <ui-icon name="java"></ui-icon><ui-icon name="wMin"></ui-icon><ui-icon name="wMax"></ui-icon><ui-icon name="wClose"></ui-icon>
            </tool-row>
            <tool-row class="menu" from="316" at="318 351 387">
              <fit-text w="26">Barang</fit-text><fit-text w="30">Supplier</fit-text><fit-text w="31">Laporan</fit-text>
            </tool-row>
            <div class="top">
              <h1><fit-text w="93">Sistem Kasir Lite</fit-text></h1>
              <swing-button bw="40"><fit-text w="26">Logout</fit-text></swing-button>
            </div>
            <div class="main">
              <div>
                <div class="form">
                  <fit-text w="48">Kode Barang</fit-text><span>:</span>
                  <span class="combo"><fit-text w="66">Pilih Kode Barang</fit-text><ui-icon name="comboArrow"></ui-icon></span>
                  <fit-text w="18">Total</fit-text><span>:</span><fit-text w="56">Rp. 100.000,00</fit-text>

                  <fit-text w="51">Nama Barang</fit-text><span>:</span><swing-field bw="105" disabled></swing-field>
                  <fit-text w="28">Dibayar</fit-text><span>:</span><swing-field bw="84"><fit-text w="56">Rp. 100.000,00</fit-text></swing-field>

                  <fit-text w="51">Harga Barang</fit-text><span>:</span><swing-field bw="105" disabled></swing-field>
                  <swing-button bw="25" style="margin-left:2px"><fit-text w="10">Ok</fit-text></swing-button><span></span><span></span>

                  <fit-text w="43">Jumlah Beli</fit-text><span>:</span><swing-field bw="105"><fit-text w="5">8</fit-text></swing-field>
                  <fit-text w="40">Kembalian</fit-text><span>:</span><fit-text w="31">Rp. 0,00</fit-text>
                </div>
                <div class="actions a1">
                  <swing-button bw="35"><fit-text w="20">Clear</fit-text></swing-button>
                  <swing-button bw="45"><fit-text w="31">Tambah</fit-text></swing-button>
                </div>
                <kasir-table></kasir-table>
                <div class="actions a2">
                  <swing-button bw="44"><fit-text w="29">Simpan</fit-text></swing-button>
                  <swing-button bw="33"><fit-text w="19">Batal</fit-text></swing-button>
                </div>
              </div>
              <nota-panel></nota-panel>
            </div>`;
    }
}

class ExcelApp extends HTMLElement {
    connectedCallback() {
        this.attachShadow({mode: 'open'}).innerHTML = `
            <style>
              :host { display: block; box-sizing: border-box; width: 1279px; height: 720px; padding-left: 1px; position: relative; }
              .body { display: flex; height: 517px; }
              sheet-grid { flex: none; }
              kasir-window { position: absolute; left: 315px; top: 200px; }
              .pointer { position: absolute; left: 698px; top: 365px; }
            </style>
            <excel-top></excel-top>
            <excel-ribbon></excel-ribbon>
            <formula-bar></formula-bar>
            <div class="body"><sheet-grid></sheet-grid><scroll-rail></scroll-rail></div>
            <sheet-tabs></sheet-tabs>
            <status-bar></status-bar>
            <kasir-window></kasir-window>
            <ui-icon class="pointer" name="pointer"></ui-icon>`;
    }
}

customElements.define('excel-app', ExcelApp);
customElements.define('excel-top', ExcelTop);
customElements.define('excel-ribbon', ExcelRibbon);
customElements.define('formula-bar', FormulaBar);
customElements.define('sheet-grid', SheetGrid);
customElements.define('scroll-rail', ScrollRail);
customElements.define('sheet-tabs', SheetTabs);
customElements.define('status-bar', StatusBar);
customElements.define('kasir-window', KasirWindow);
customElements.define('kasir-table', KasirTable);
customElements.define('nota-panel', NotaPanel);
customElements.define('swing-button', SwingButton);
customElements.define('swing-field', SwingField);
customElements.define('ribbon-group', RibbonGroup);
customElements.define('tool-row', ToolRow);
customElements.define('ui-icon', UiIcon);
customElements.define('fit-text', FitText);
</script>
</body>
</html>
